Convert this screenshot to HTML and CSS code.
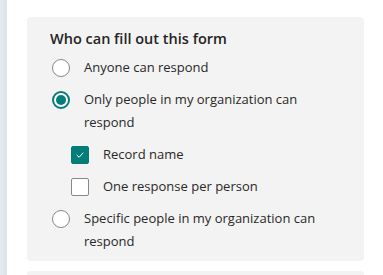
FILE: index.html
```html
<!DOCTYPE html>
<html lang="en">
<head>
    <meta charset="UTF-8">
    <title>Form settings</title>
    <link rel="stylesheet" href="styles.css">
</head>
<body>
    <div class="page">
        <div class="side-strip"></div>
        <div class="content">
            <div class="card">
                <h3 class="card-title">Who can fill out this form</h3>
                <div class="options">
                    <div class="option">
                        <span class="radio"></span>
                        <span class="label">Anyone can respond</span>
                    </div>
                    <div class="option">
                        <span class="radio checked"></span>
                        <span class="label">Only people in my organization can respond</span>
                    </div>
                    <div class="option sub">
                        <span class="checkbox checked">
                            <svg width="10" height="10" viewBox="0 0 10 10"><path d="M2 5.3 L4.1 7.3 L8 3" fill="none" stroke="#fff" stroke-width="1" stroke-linecap="round" stroke-linejoin="round"/></svg>
                        </span>
                        <span class="label">Record name</span>
                    </div>
                    <div class="option sub">
                        <span class="checkbox"></span>
                        <span class="label">One response per person</span>
                    </div>
                    <div class="option">
                        <span class="radio"></span>
                        <span class="label">Specific people in my organization can respond</span>
                    </div>
                </div>
            </div>
            <div class="card next"></div>
        </div>
    </div>
</body>
</html>
```

FILE: styles.css
```css
body {
    margin: 0;
    font-family: 'Open Sans', 'Lato', sans-serif;
    background-color: #fff;
    color: #292827;
}

.page {
    display: flex;
    height: 275px;
    overflow: hidden;
}

.side-strip {
    width: 7px;
    flex-shrink: 0;
    background: linear-gradient(to right, #e6ecef, #dbe4e9);
}

.content {
    padding: 17px 0 0 20px;
}

.card {
    width: 337px;
    box-sizing: border-box;
    background-color: #f3f3f3;
    border-radius: 4px;
    padding: 12px 23px 8px 23px;
}

.card.next {
    margin-top: 10px;
    height: 40px;
}

.card-title {
    margin: 0;
    font-size: 14.5px;
    font-weight: 600;
    line-height: 20px;
    color: #252423;
}

.options {
    display: flex;
    flex-direction: column;
    gap: 9px;
    margin-top: 7px;
    padding-left: 2px;
}

.option {
    display: flex;
    align-items: flex-start;
    gap: 14px;
    font-size: 13px;
    line-height: 23px;
}

.option.sub {
    padding-left: 19px;
}

.label {
    max-width: 240px;
}

.radio {
    width: 18px;
    height: 18px;
    box-sizing: border-box;
    flex-shrink: 0;
    margin-top: 2.5px;
    border: 1px solid #8a8886;
    border-radius: 50%;
    background-color: #fff;
    position: relative;
}

.radio.checked {
    border: 2px solid #037c7a;
}

.radio.checked::after {
    content: "";
    position: absolute;
    left: 2px;
    top: 2px;
    width: 10px;
    height: 10px;
    border-radius: 50%;
    background-color: #037c7a;
}

.checkbox {
    width: 18px;
    height: 18px;
    box-sizing: border-box;
    flex-shrink: 0;
    margin-top: 2.5px;
    border: 1px solid #8a8886;
    border-radius: 2px;
    background-color: #fff;
    display: flex;
    align-items: center;
    justify-content: center;
}

.checkbox.checked {
    border-color: #037c7a;
    background-color: #037c7a;
}
```
